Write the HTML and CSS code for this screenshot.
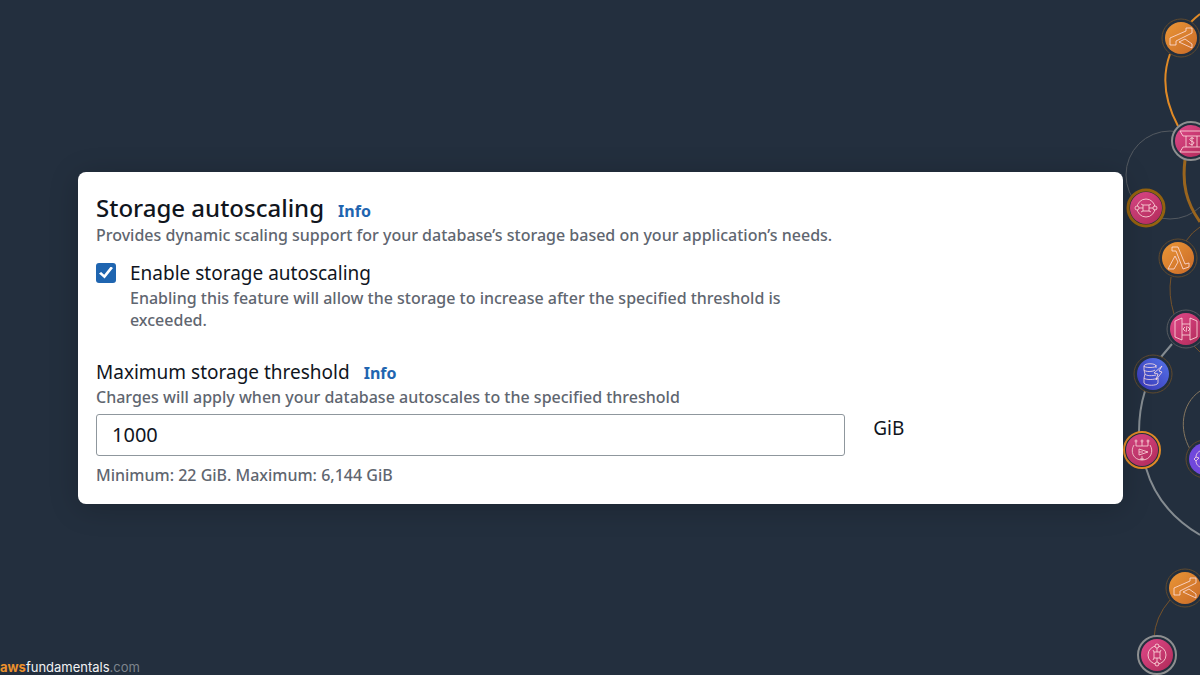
FILE: index.html
```html
<!DOCTYPE html>
<html lang="en">
<head>
    <meta charset="UTF-8">
    <meta name="viewport" content="width=device-width, initial-scale=1.0">
    <title>Storage autoscaling</title>
    <link rel="stylesheet" href="styles.css">
</head>
<body>
    <svg class="services" viewBox="0 0 100 675" aria-hidden="true">
        <defs>
            <linearGradient id="orange" x1="0" y1="0" x2="1" y2="1">
                <stop offset="0" stop-color="#ea9636"/>
                <stop offset="1" stop-color="#c96a28"/>
            </linearGradient>
            <linearGradient id="pink" x1="0" y1="0" x2="1" y2="1">
                <stop offset="0" stop-color="#e0498a"/>
                <stop offset="1" stop-color="#b02a58"/>
            </linearGradient>
            <linearGradient id="blue" x1="1" y1="0" x2="0" y2="1">
                <stop offset="0" stop-color="#5573e8"/>
                <stop offset="1" stop-color="#3734b4"/>
            </linearGradient>
            <g id="elbow">
                <path d="M-11 0L5-7V-10H11V-5L-5 3V7H-11Z"/>
                <path d="M-2 4L4 1L11 6V10Z"/>
            </g>
            <g id="hub">
                <circle r="9"/>
                <circle class="hub-dot" cx="-9" r="2"/>
                <circle class="hub-dot" cx="9" r="2"/>
                <path d="M-3-3H3V3H-3ZM-3-3L-5-4M3-3L5-4M-3 3L-5 4M3 3L5 4M-7 0H-3M3 0H7"/>
            </g>
        </defs>

        <!-- connecting lines -->
        <g class="lines">
            <circle class="line-dim" cx="70" cy="175" r="44"/>
            <path class="line-orange" d="M100 14Q96 17 91 22M70 54C62 76 64 100 78 126"/>
            <path class="line-amber" d="M85 160C82 184 86 202 100 222"/>
            <path class="line-brown" d="M100 227Q92 232 86 241M71 277Q68 295 74 314M94 346L100 352"/>
            <path class="line-grey" d="M72 344L61 357M45 391Q39 410 39 432M46 468Q58 510 100 535"/>
            <path class="line-tan" d="M100 391C81 404 79 430 90 449"/>
            <path class="line-brown" d="M70 600Q55 617 54 638"/>
        </g>

        <g class="node" transform="translate(81 38)">
            <circle class="ring ring-brown" r="19"/>
            <circle r="16" fill="url(#orange)"/>
            <use href="#elbow"/>
        </g>
        <g class="node" transform="translate(91 141)">
            <circle class="ring ring-light" r="19"/>
            <circle r="16" fill="url(#pink)"/>
            <path d="M-11-10H12M-11-10L-8-5H12M-11 11H12M-11 11L-8 6H12M-5-5V6M6-5V6M3-2C2-4-2-3-1-1C0 1 3 0 3 2C2 4-1 4-2 2M1-4V5"/>
        </g>
        <g class="node" transform="translate(46 208)">
            <circle class="ring ring-gold" r="18"/>
            <circle r="16" fill="url(#pink)"/>
            <use href="#hub"/>
        </g>
        <g class="node" transform="translate(78 258)">
            <circle class="ring ring-brown" r="19"/>
            <circle r="16" fill="url(#orange)"/>
            <path d="M-6-11H0L7 6L11 5V9L5 11L-2-7H-6ZM-3-2L0 4L-4 11H-10Z"/>
        </g>
        <g class="node" transform="translate(86 329)">
            <circle class="ring ring-grey" r="19"/>
            <circle r="16" fill="url(#pink)"/>
            <path d="M-11-8L-4-11V11L-11 8ZM11-8L4-11V11L11 8ZM-4-5H4M-4 6H4M-1-2L-3 0L-1 2M2-2L4 0L2 2M1-3L0 3"/>
        </g>
        <g class="node" transform="translate(53 374)">
            <circle class="ring ring-brown" r="19"/>
            <circle r="16" fill="url(#blue)"/>
            <path d="M-9-8C-9-11 3-11 3-8C3-6-9-6-9-8V-4C-8-2 0-2 2-4M-9-4L-8 0C-7 2 0 2 3 1M-8 0L-9 4C-8 6 2 6 4 4M-9 4V9C-7 12 4 12 5 9V4M3-9V-6M9-8L1-1L5 0L3 6L9-2L6-3Z"/>
        </g>
        <g class="node" transform="translate(42 450)">
            <circle class="ring ring-orange" r="18"/>
            <circle r="16" fill="url(#pink)"/>
            <circle cx="-6" cy="-9" r="1"/>
            <circle cx="0" cy="-9" r="1"/>
            <circle cx="6" cy="-9" r="1"/>
            <path d="M-6-8V-4H6V-8M0-8V-4M-8-5C-12 1-9 10 0 10C9 10 12 1 8-5M-3-1L6 2L-3 5ZM-3 2H1M0 6V10M-2 9H2"/>
        </g>
        <g class="node" transform="translate(105 459)">
            <circle class="ring ring-brown" r="19"/>
            <circle r="16" fill="#7048dc"/>
            <path d="M-2-9C-7-8-9-5-9-2L-6-1L-9 2C-9 5-7 8-2 9M-5-6H0M-9-2L-11 0L-9 2"/>
        </g>
        <g class="node" transform="translate(85 588)">
            <circle class="ring ring-brown" r="19"/>
            <circle r="16" fill="url(#orange)"/>
            <use href="#elbow"/>
        </g>
        <g class="node" transform="translate(57 655)">
            <circle class="ring ring-light" r="19"/>
            <circle r="16" fill="url(#pink)"/>
            <use href="#hub" transform="rotate(90)"/>
        </g>
    </svg>

    <main class="page">
        <form class="card">
            <div class="heading">
                <h1>Storage autoscaling</h1>
                <a class="info" href="#">Info</a>
            </div>
            <p class="hint">Provides dynamic scaling support for your database’s storage based on your application’s needs.</p>

            <div class="option">
                <input type="checkbox" id="autoscaling" aria-describedby="autoscaling-hint" checked>
                <div class="option-text">
                    <label for="autoscaling">Enable storage autoscaling</label>
                    <p class="hint" id="autoscaling-hint">Enabling this feature will allow the storage to increase after the specified threshold is exceeded.</p>
                </div>
            </div>

            <div class="heading">
                <label for="threshold">Maximum storage threshold</label>
                <a class="info" href="#">Info</a>
            </div>
            <p class="hint">Charges will apply when your database autoscales to the specified threshold</p>
            <div class="field">
                <input type="text" id="threshold" inputmode="numeric" value="1000">
                <span class="unit">GiB</span>
            </div>
            <p class="hint">Minimum: 22 GiB. Maximum: 6,144 GiB</p>
        </form>
    </main>

    <footer class="brand"><b>aws</b><span>fundamentals</span>.com</footer>
</body>
</html>
```
FILE: styles.css
```css
* {
    box-sizing: border-box;
}

body {
    margin: 0;
    background-color: #232f3e;
    color: #10151d;
    font-family: "Noto Sans", "Open Sans", sans-serif;
    overflow-x: hidden;
}

.page {
    display: flex;
    align-items: center;
    min-height: 100vh;
    padding: 0 77px 0 78px;
}

.card {
    position: relative;
    flex: 1;
    padding: 20px 18px 18px;
    background: white;
    border-radius: 8px;
    box-shadow: 0 4px 30px rgba(0, 0, 0, 0.2);
}

.heading {
    display: flex;
    align-items: baseline;
    gap: 14px;
}

h1 {
    margin: 0;
    font-size: 24px;
    font-weight: 500;
    line-height: 32px;
}

label {
    font-size: 19px;
    line-height: 27px;
}

.info {
    color: #1f65b0;
    font-size: 16px;
    font-weight: 700;
    line-height: 24px;
    text-decoration: none;
}

.hint {
    margin: 0;
    color: #5f6670;
    font-size: 16px;
    font-weight: 500;
    line-height: 22px;
}

.option {
    display: flex;
    gap: 14px;
    margin: 14px 0 28px;
}

.option-text {
    width: 66%;
}

.option-text label {
    display: block;
}

input[type="checkbox"] {
    appearance: none;
    flex: none;
    display: grid;
    place-items: center;
    width: 20px;
    height: 20px;
    margin: 3px 0;
    background: #1f65b0;
    border-radius: 3px;
}

input[type="checkbox"]:checked::before {
    content: "";
    width: 14px;
    height: 12px;
    background: white;
    clip-path: polygon(0 58%, 15% 45%, 37% 68%, 84% 0, 100% 12%, 40% 100%);
}

.field {
    display: grid;
    grid-template-columns: 3fr 1fr;
    gap: 10px;
    margin: 6px 0 8px;
}

input[type="text"] {
    width: 100%;
    height: 42px;
    padding: 0 15px;
    border: 1px solid #8f979d;
    border-radius: 3px;
    background: white;
    color: #10151d;
    font-family: inherit;
    font-size: 20px;
}

.unit {
    padding-left: 18px;
    font-size: 19px;
    line-height: 28px;
}

.brand {
    position: absolute;
    bottom: 0;
    left: 0;
    color: #7d848c;
    font-family: Inter, sans-serif;
    font-size: 13px;
    line-height: 15px;
}

.brand b {
    color: #ec912d;
}

.brand span {
    color: #f1f2f3;
}

/* service map on the right edge */
.services {
    position: absolute;
    top: 0;
    right: 0;
    width: 100px;
    height: 675px;
}

.lines {
    fill: none;
    stroke-width: 2;
}

.line-orange {
    stroke: #e08a26;
}

.line-amber {
    stroke: #9a651e;
    stroke-width: 3;
}

.line-brown {
    stroke: #76532b;
    stroke-width: 1;
}

.line-grey {
    stroke: #858c91;
}

.line-tan {
    stroke: #85765f;
    stroke-width: 1;
}

.line-dim {
    stroke: #535960;
    stroke-width: 1;
}

.node {
    fill: none;
    stroke: rgba(255, 225, 225, 0.8);
    stroke-width: 1;
}

.node > circle[r="16"] {
    stroke: none;
}

.hub-dot {
    fill: #cb3c72;
}

.node .ring {
    fill: #232f3e;
}

.node .ring-brown {
    stroke: #604a2e;
}

.node .ring-light {
    stroke: #8d8f90;
    stroke-width: 2;
}

.node .ring-grey {
    stroke: #565b60;
}

.node .ring-gold {
    stroke: #94620f;
    stroke-width: 3;
}

.node .ring-orange {
    stroke: #e08a26;
    stroke-width: 2;
}
```
